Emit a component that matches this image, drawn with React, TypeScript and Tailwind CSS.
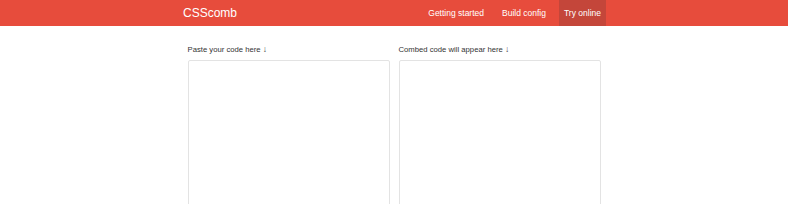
export default function App() {
  return (
    <div className="min-h-screen bg-white font-['Liberation_Sans',Arial,sans-serif] overflow-hidden">
      {/* Header */}
      <header className="h-[26px] bg-[#e74c3c]">
        <div className="mx-auto flex h-full w-[424px] items-stretch justify-between">
          <a className="flex items-center pl-[1px] text-[12px] text-white">CSScomb</a>
          <nav className="flex items-stretch gap-[8px] text-[8.5px] text-white">
            <a className="flex items-center px-[5px]">Getting started</a>
            <a className="flex items-center px-[5px]">Build config</a>
            <a className="flex items-center bg-[#c4463a] px-[5px]">Try online</a>
          </nav>
        </div>
      </header>

      {/* Editors */}
      <main className="mx-auto mt-[18px] grid w-[413px] grid-cols-2 gap-[9px]">
        <div className="flex flex-col">
          <label className="mb-[5px] text-[7.7px] leading-[11px] text-[#333]">
            Paste your code here <span className="text-[8.5px]">↓</span>
          </label>
          <textarea className="h-[160px] resize-none rounded-[2px] border border-[#e3e3e3] bg-transparent" />
        </div>
        <div className="flex flex-col">
          <label className="mb-[5px] text-[7.7px] leading-[11px] text-[#333]">
            Combed code will appear here <span className="text-[8.5px]">↓</span>
          </label>
          <textarea className="h-[160px] resize-none rounded-[2px] border border-[#e3e3e3] bg-transparent" />
        </div>
      </main>
    </div>
  );
}
